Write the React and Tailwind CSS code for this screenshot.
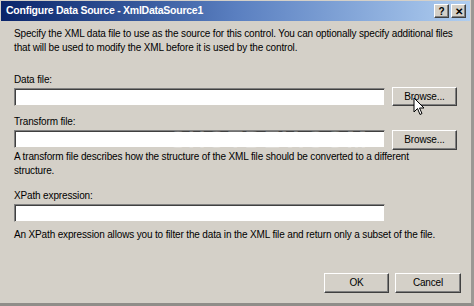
import React from "react";

const font = { fontFamily: "'Liberation Sans', Arial, sans-serif" };

function Btn({ children, className = "" }) {
  return (
    <div
      className={`flex items-center justify-center bg-[#d4d0c8] border border-t-white border-l-white border-r-[#404040] border-b-[#404040] shadow-[inset_-1px_-1px_0_#808080] text-[10px] text-black ${className}`}
    >
      {children}
    </div>
  );
}

function Input() {
  return (
    <div className="h-[18px] w-[371px] bg-white border border-t-[#808080] border-l-[#808080] border-r-[#d4d0c8] border-b-[#d4d0c8] shadow-[inset_1px_1px_0_#404040]" />
  );
}

export default function App() {
  return (
    <div
      className="relative w-[474px] h-[306px] bg-[#d4d0c8] border-r-[3px] border-b-[3px] border-r-[#9a9894] border-b-[#8f8d89] flex flex-col overflow-hidden"
      style={font}
    >
      <div className="h-[20px] mt-px mx-px flex items-center justify-between bg-gradient-to-r from-[#0a246a] via-[#5a7fc0] to-[#b0cef0]">
        <span className="pl-[5px] text-[10.5px] tracking-[-0.25px] font-bold text-white whitespace-nowrap">
          Configure Data Source - XmlDataSource1
        </span>
        <div className="flex gap-[2px] pr-[4px]">
          <Btn className="w-[15px] h-[14px] font-bold">?</Btn>
          <Btn className="w-[15px] h-[14px] font-bold">✕</Btn>
        </div>
      </div>
      <div className="flex flex-col pl-[14px] pt-[6px] text-[10px] tracking-[-0.15px] text-black leading-[14px] whitespace-nowrap">
        <p>
          Specify the XML data file to use as the source for this control. You can optionally specify additional files
          <br />
          that will be used to modify the XML before it is used by the control.
        </p>
        <span className="mt-[18px]">Data file:</span>
        <div className="mt-[0px] flex items-center gap-[7px]">
          <Input />
          <Btn className="w-[65px] h-[19px]">Browse...</Btn>
        </div>
        <span className="mt-[9px]">Transform file:</span>
        <div className="mt-[1px] flex items-start gap-[7px]">
          <Input />
          <Btn className="w-[65px] h-[20px]">Browse...</Btn>
        </div>
        <p className="mt-[0px]">
          A transform file describes how the structure of the XML file should be converted to a different
          <br />
          structure.
        </p>
        <span className="mt-[11px]">XPath expression:</span>
        <div className="mt-[1px] flex">
          <Input />
        </div>
        <p className="mt-[6px]">
          An XPath expression allows you to filter the data in the XML file and return only a subset of the file.
        </p>
        <div className="mt-[31px] flex justify-end gap-[6px] pr-[10px]">
          <Btn className="w-[65px] h-[20px]">OK</Btn>
          <Btn className="w-[66px] h-[20px]">Cancel</Btn>
        </div>
      </div>
      <div className="absolute left-[170px] top-[128px] text-[24px] leading-[24px] font-bold text-white/25 tracking-[2px] pointer-events-none">
        SHOTDEV.COM
      </div>
      <svg className="absolute left-[413px] top-[97px]" width="13" height="20" viewBox="0 0 13 20">
        <path d="M1 1 L1 15 L4.5 11.5 L7 17.5 L9 16.5 L6.5 11 L11 11 Z" fill="white" stroke="black" strokeWidth="1" strokeLinejoin="round" />
      </svg>
    </div>
  );
}
